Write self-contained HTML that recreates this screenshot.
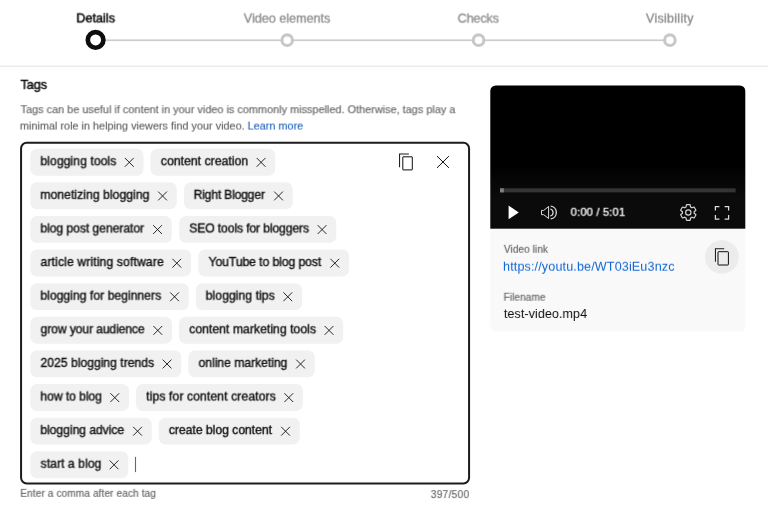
<!DOCTYPE html><html><head><meta charset="utf-8"><title>Tags</title><style>

html,body{margin:0;padding:0;background:#fff;}
body{width:768px;height:515px;position:relative;overflow:hidden;font-family:"Liberation Sans", Arial, sans-serif;}
.t{position:absolute;left:0;top:0;white-space:nowrap;line-height:1;will-change:transform;transform-origin:0 0;}
.abs{position:absolute;}
svg.art{position:absolute;left:0;top:0;}

</style></head><body>
<svg class="art" width="768" height="515" viewBox="0 0 768 515">
<rect x="95.5" y="39.4" width="574" height="1.7" fill="#cccccc"/><rect x="0" y="65.5" width="768" height="1.5" fill="#ececec"/><circle cx="95.6" cy="39.95" r="7.78" fill="#fff" stroke="#0d0d0d" stroke-width="4.65"/><circle cx="287.2" cy="40.2" r="5.3" fill="#fff" stroke="#c8c8c8" stroke-width="3.1"/><circle cx="478.6" cy="40.2" r="5.3" fill="#fff" stroke="#c8c8c8" stroke-width="3.1"/><circle cx="669.9" cy="40.2" r="5.3" fill="#fff" stroke="#c8c8c8" stroke-width="3.1"/>
<rect x="21.07" y="142.85" width="448.0" height="340.6" rx="5.6" fill="#fff" stroke="#1c1c1c" stroke-width="2"/>
<rect x="30.25" y="148.75" width="113.25" height="26.90" rx="6.7" fill="#f1f1f1"/>
<path d="M124.90 157.95L133.70 166.75M133.70 157.95L124.90 166.75" stroke="#161616" stroke-width="0.92" fill="none"/>
<rect x="150.50" y="148.75" width="124.75" height="26.90" rx="6.7" fill="#f1f1f1"/>
<path d="M256.65 157.95L265.45 166.75M265.45 157.95L256.65 166.75" stroke="#161616" stroke-width="0.92" fill="none"/>
<rect x="30.25" y="182.36" width="146.50" height="26.90" rx="6.7" fill="#f1f1f1"/>
<path d="M158.15 191.56L166.95 200.36M166.95 191.56L158.15 200.36" stroke="#161616" stroke-width="0.92" fill="none"/>
<rect x="184.00" y="182.36" width="108.75" height="26.90" rx="6.7" fill="#f1f1f1"/>
<path d="M274.15 191.56L282.95 200.36M282.95 191.56L274.15 200.36" stroke="#161616" stroke-width="0.92" fill="none"/>
<rect x="30.25" y="215.97" width="141.50" height="26.90" rx="6.7" fill="#f1f1f1"/>
<path d="M153.15 225.17L161.95 233.97M161.95 225.17L153.15 233.97" stroke="#161616" stroke-width="0.92" fill="none"/>
<rect x="179.25" y="215.97" width="157.00" height="26.90" rx="6.7" fill="#f1f1f1"/>
<path d="M317.65 225.17L326.45 233.97M326.45 225.17L317.65 233.97" stroke="#161616" stroke-width="0.92" fill="none"/>
<rect x="30.25" y="249.58" width="160.75" height="26.90" rx="6.7" fill="#f1f1f1"/>
<path d="M172.40 258.78L181.20 267.58M181.20 258.78L172.40 267.58" stroke="#161616" stroke-width="0.92" fill="none"/>
<rect x="198.25" y="249.58" width="150.75" height="26.90" rx="6.7" fill="#f1f1f1"/>
<path d="M330.40 258.78L339.20 267.58M339.20 258.78L330.40 267.58" stroke="#161616" stroke-width="0.92" fill="none"/>
<rect x="30.25" y="283.19" width="158.50" height="26.90" rx="6.7" fill="#f1f1f1"/>
<path d="M170.15 292.39L178.95 301.19M178.95 292.39L170.15 301.19" stroke="#161616" stroke-width="0.92" fill="none"/>
<rect x="195.75" y="283.19" width="106.25" height="26.90" rx="6.7" fill="#f1f1f1"/>
<path d="M283.40 292.39L292.20 301.19M292.20 292.39L283.40 301.19" stroke="#161616" stroke-width="0.92" fill="none"/>
<rect x="30.25" y="316.80" width="141.75" height="26.90" rx="6.7" fill="#f1f1f1"/>
<path d="M153.40 326.00L162.20 334.80M162.20 326.00L153.40 334.80" stroke="#161616" stroke-width="0.92" fill="none"/>
<rect x="179.00" y="316.80" width="164.25" height="26.90" rx="6.7" fill="#f1f1f1"/>
<path d="M324.65 326.00L333.45 334.80M333.45 326.00L324.65 334.80" stroke="#161616" stroke-width="0.92" fill="none"/>
<rect x="30.25" y="350.41" width="151.00" height="26.90" rx="6.7" fill="#f1f1f1"/>
<path d="M162.65 359.61L171.45 368.41M171.45 359.61L162.65 368.41" stroke="#161616" stroke-width="0.92" fill="none"/>
<rect x="188.25" y="350.41" width="126.50" height="26.90" rx="6.7" fill="#f1f1f1"/>
<path d="M296.15 359.61L304.95 368.41M304.95 359.61L296.15 368.41" stroke="#161616" stroke-width="0.92" fill="none"/>
<rect x="30.25" y="384.02" width="98.75" height="26.90" rx="6.7" fill="#f1f1f1"/>
<path d="M110.40 393.22L119.20 402.02M119.20 393.22L110.40 402.02" stroke="#161616" stroke-width="0.92" fill="none"/>
<rect x="136.00" y="384.02" width="167.00" height="26.90" rx="6.7" fill="#f1f1f1"/>
<path d="M284.40 393.22L293.20 402.02M293.20 393.22L284.40 402.02" stroke="#161616" stroke-width="0.92" fill="none"/>
<rect x="30.25" y="417.63" width="121.50" height="26.90" rx="6.7" fill="#f1f1f1"/>
<path d="M133.15 426.83L141.95 435.63M141.95 426.83L133.15 435.63" stroke="#161616" stroke-width="0.92" fill="none"/>
<rect x="158.75" y="417.63" width="141.00" height="26.90" rx="6.7" fill="#f1f1f1"/>
<path d="M281.15 426.83L289.95 435.63M289.95 426.83L281.15 435.63" stroke="#161616" stroke-width="0.92" fill="none"/>
<rect x="30.25" y="451.24" width="98.00" height="26.90" rx="6.7" fill="#f1f1f1"/>
<path d="M109.65 460.44L118.45 469.24M118.45 460.44L109.65 469.24" stroke="#161616" stroke-width="0.92" fill="none"/>
<rect x="134.95" y="456.9" width="1.1" height="15.2" fill="#2a72da"/>
<path d="M399.55 167.2V154.05H408.9" stroke="#1c1c1c" stroke-width="1.05" fill="none"/><rect x="402.8" y="156.8" width="9.5" height="13.1" rx="0.3" stroke="#0d0d0d" stroke-width="1" fill="none"/>
<path d="M437 156.1L448.9 167.9M448.9 156.1L437 167.9" stroke="#0d0d0d" stroke-width="1" fill="none"/>
<defs><clipPath id="cc"><rect x="490.3" y="85.4" width="255" height="246.1" rx="5.5"/></clipPath><linearGradient id="vg" x1="0" y1="0" x2="0" y2="1"><stop offset="0.55" stop-color="#000"/><stop offset="0.78" stop-color="#0b0b0b"/></linearGradient></defs><g clip-path="url(#cc)"><rect x="490" y="85" width="256" height="247" fill="#f9f9f9"/><rect x="490" y="85" width="256" height="143.7" fill="url(#vg)"/></g>
<rect x="500" y="188.3" width="235.6" height="4.1" fill="#343434"/><rect x="500" y="188.3" width="3.8" height="4.1" fill="#808080"/>
<path d="M508.6 205.6L518.8 212.4L508.6 219.2Z" fill="#fff"/>
<g stroke="#dcdcdc" fill="none"><path stroke-width="1" d="M541.5 210.4H543.7L548.6 206.5V218.5L543.7 214.7H541.5Z"/><path stroke-width="1.2" d="M550.3 209A3.6 3.6 0 0 1 550.3 216"/><path stroke-width="1.3" d="M550.7 206.1A6.45 6.45 0 0 1 550.7 218.9"/></g>
<svg x="678.9" y="203.1" width="18.8" height="18.8" viewBox="0 0 24 24"><path fill="none" stroke="#d6d6d6" stroke-width="1.5" d="M12 8.6a3.4 3.4 0 1 0 0 6.8 3.4 3.4 0 0 0 0-6.8zM19.4 13c.04-.33.07-.66.07-1s-.03-.67-.07-1l2.1-1.65a.5.5 0 0 0 .12-.64l-2-3.46a.5.5 0 0 0-.61-.22l-2.49 1a7.3 7.3 0 0 0-1.69-.98l-.38-2.65A.49.49 0 0 0 14 2h-4a.49.49 0 0 0-.49.42l-.38 2.65c-.61.25-1.17.59-1.69.98l-2.49-1a.5.5 0 0 0-.61.22l-2 3.46a.5.5 0 0 0 .12.64L4.57 11c-.04.33-.07.66-.07 1s.03.67.07 1l-2.11 1.65a.5.5 0 0 0-.12.64l2 3.46c.12.22.39.3.61.22l2.49-1c.52.4 1.08.73 1.69.98l.38 2.65c.03.24.24.42.49.42h4c.25 0 .46-.18.49-.42l.38-2.65c.61-.25 1.17-.59 1.69-.98l2.49 1c.23.09.49 0 .61-.22l2-3.46a.5.5 0 0 0-.12-.64L19.4 13z"/></svg>
<path d="M715.4 210.6V206.6H719.4M724.6 206.6H728.6V210.6M728.6 215.1V219.1H724.6M719.4 219.1H715.4V215.1" stroke="#dddddd" stroke-width="1.25" fill="none"/>
<circle cx="721.9" cy="257" r="16.85" fill="#ececec"/>
<path d="M715.45 261.8V248.65H724.2" stroke="#1c1c1c" stroke-width="1.05" fill="none"/><rect x="718" y="251.7" width="10.4" height="13.3" rx="0.5" stroke="#0d0d0d" stroke-width="1" fill="none"/>
</svg>
<div class="t" id="t_details" style="transform:translate(76.279px,12.400px) rotate(0.001deg);font-size:12.60px;color:#0d0d0d;letter-spacing:0.037px;-webkit-text-stroke:0.50px #0d0d0d;">Details</div>
<div class="t" id="t_velem" style="transform:translate(243.756px,12.598px) rotate(0.001deg);font-size:12.60px;color:#909090;letter-spacing:0.005px;-webkit-text-stroke:0.35px #909090;">Video elements</div>
<div class="t" id="t_checks" style="transform:translate(457.659px,12.599px) rotate(0.001deg);font-size:12.60px;color:#909090;letter-spacing:-0.138px;-webkit-text-stroke:0.35px #909090;">Checks</div>
<div class="t" id="t_vis" style="transform:translate(645.909px,12.599px) rotate(0.001deg);font-size:12.60px;color:#909090;letter-spacing:0.248px;-webkit-text-stroke:0.35px #909090;">Visibility</div>
<div class="t" id="t_tags" style="transform:translate(20.512px,78.899px) rotate(0.001deg);font-size:12.60px;color:#0d0d0d;letter-spacing:-0.013px;-webkit-text-stroke:0.50px #0d0d0d;">Tags</div>
<div class="t" id="t_enter" style="transform:translate(20.334px,488.847px) rotate(0.001deg);font-size:10.10px;color:#606060;letter-spacing:0.099px;-webkit-text-stroke:0.12px #606060;">Enter a comma after each tag</div>
<div class="t" id="t_count" style="transform:translate(430.760px,490.099px) rotate(0.001deg);font-size:10.10px;color:#606060;letter-spacing:0.295px;-webkit-text-stroke:0.12px #606060;">397/500</div>
<div class="t" id="t_time" style="transform:translate(570.611px,206.749px) rotate(0.001deg);font-size:11.30px;color:#ffffff;letter-spacing:0.109px;-webkit-text-stroke:0.25px #ffffff;">0:00 / 5:01</div>
<div class="t" id="t_vlink" style="transform:translate(503.839px,244.799px) rotate(0.001deg);font-size:10.10px;color:#606060;letter-spacing:0.063px;-webkit-text-stroke:0.12px #606060;">Video link</div>
<div class="t" id="t_url" style="transform:translate(503.000px,260.747px) rotate(0.001deg);font-size:12.60px;color:#1165d6;letter-spacing:0.129px;">https://youtu.be/WT03iEu3nzc</div>
<div class="t" id="t_fname" style="transform:translate(503.628px,292.750px) rotate(0.001deg);font-size:10.10px;color:#606060;letter-spacing:0.041px;-webkit-text-stroke:0.12px #606060;">Filename</div>
<div class="t" id="t_file" style="transform:translate(503.888px,307.998px) rotate(0.001deg);font-size:12.60px;color:#0d0d0d;letter-spacing:0.044px;">test-video.mp4</div>
<div class="t" id="d1" style="transform:translate(20.593px,104.243px) rotate(0.001deg);font-size:10.90px;color:#606060;letter-spacing:0.001px;-webkit-text-stroke:0.12px #606060;">Tags can be useful if content in your video is commonly misspelled. Otherwise, tags play a</div>
<div class="t" id="d2" style="transform:translate(19.877px,120.596px) rotate(0.001deg);font-size:10.90px;color:#606060;letter-spacing:-0.010px;-webkit-text-stroke:0.12px #606060;">minimal role in helping viewers find your video. <span style="color:#1165d6">Learn more</span></div>
<div class="t" id="c_0_0" style="transform:translate(40.455px,155.249px) rotate(0.001deg);font-size:12.20px;color:#0d0d0d;letter-spacing:0.053px;-webkit-text-stroke:0.36px #0d0d0d;">blogging tools</div>
<div class="t" id="c_0_1" style="transform:translate(160.815px,155.249px) rotate(0.001deg);font-size:12.20px;color:#0d0d0d;letter-spacing:0.045px;-webkit-text-stroke:0.36px #0d0d0d;">content creation</div>
<div class="t" id="c_1_0" style="transform:translate(40.368px,188.858px) rotate(0.001deg);font-size:12.20px;color:#0d0d0d;letter-spacing:0.039px;-webkit-text-stroke:0.36px #0d0d0d;">monetizing blogging</div>
<div class="t" id="c_1_1" style="transform:translate(193.613px,188.859px) rotate(0.001deg);font-size:12.20px;color:#0d0d0d;letter-spacing:-0.213px;-webkit-text-stroke:0.36px #0d0d0d;">Right Blogger</div>
<div class="t" id="c_2_0" style="transform:translate(40.444px,222.468px) rotate(0.001deg);font-size:12.20px;color:#0d0d0d;letter-spacing:-0.076px;-webkit-text-stroke:0.36px #0d0d0d;">blog post generator</div>
<div class="t" id="c_2_1" style="transform:translate(189.267px,222.468px) rotate(0.001deg);font-size:12.20px;color:#0d0d0d;letter-spacing:-0.134px;-webkit-text-stroke:0.36px #0d0d0d;">SEO tools for bloggers</div>
<div class="t" id="c_3_0" style="transform:translate(40.533px,256.077px) rotate(0.001deg);font-size:12.20px;color:#0d0d0d;letter-spacing:0.113px;-webkit-text-stroke:0.36px #0d0d0d;">article writing software</div>
<div class="t" id="c_3_1" style="transform:translate(208.565px,256.078px) rotate(0.001deg);font-size:12.20px;color:#0d0d0d;letter-spacing:-0.084px;-webkit-text-stroke:0.36px #0d0d0d;">YouTube to blog post</div>
<div class="t" id="c_4_0" style="transform:translate(40.435px,289.688px) rotate(0.001deg);font-size:12.20px;color:#0d0d0d;letter-spacing:0.007px;-webkit-text-stroke:0.36px #0d0d0d;">blogging for beginners</div>
<div class="t" id="c_4_1" style="transform:translate(205.677px,289.689px) rotate(0.001deg);font-size:12.20px;color:#0d0d0d;letter-spacing:0.045px;-webkit-text-stroke:0.36px #0d0d0d;">blogging tips</div>
<div class="t" id="c_5_0" style="transform:translate(40.590px,323.298px) rotate(0.001deg);font-size:12.20px;color:#0d0d0d;letter-spacing:-0.134px;-webkit-text-stroke:0.36px #0d0d0d;">grow your audience</div>
<div class="t" id="c_5_1" style="transform:translate(189.237px,323.298px) rotate(0.001deg);font-size:12.20px;color:#0d0d0d;letter-spacing:0.037px;-webkit-text-stroke:0.36px #0d0d0d;">content marketing tools</div>
<div class="t" id="c_6_0" style="transform:translate(40.508px,356.908px) rotate(0.001deg);font-size:12.20px;color:#0d0d0d;letter-spacing:-0.015px;-webkit-text-stroke:0.36px #0d0d0d;">2025 blogging trends</div>
<div class="t" id="c_6_1" style="transform:translate(198.556px,356.908px) rotate(0.001deg);font-size:12.20px;color:#0d0d0d;letter-spacing:-0.040px;-webkit-text-stroke:0.36px #0d0d0d;">online marketing</div>
<div class="t" id="c_7_0" style="transform:translate(40.419px,390.519px) rotate(0.001deg);font-size:12.20px;color:#0d0d0d;letter-spacing:-0.074px;-webkit-text-stroke:0.36px #0d0d0d;">how to blog</div>
<div class="t" id="c_7_1" style="transform:translate(146.238px,390.518px) rotate(0.001deg);font-size:12.20px;color:#0d0d0d;letter-spacing:0.094px;-webkit-text-stroke:0.36px #0d0d0d;">tips for content creators</div>
<div class="t" id="c_8_0" style="transform:translate(40.412px,424.129px) rotate(0.001deg);font-size:12.20px;color:#0d0d0d;letter-spacing:-0.065px;-webkit-text-stroke:0.36px #0d0d0d;">blogging advice</div>
<div class="t" id="c_8_1" style="transform:translate(168.852px,424.128px) rotate(0.001deg);font-size:12.20px;color:#0d0d0d;letter-spacing:-0.031px;-webkit-text-stroke:0.36px #0d0d0d;">create blog content</div>
<div class="t" id="c_9_0" style="transform:translate(40.564px,457.739px) rotate(0.001deg);font-size:12.20px;color:#0d0d0d;letter-spacing:0.040px;-webkit-text-stroke:0.36px #0d0d0d;">start a blog</div>
</body></html>
